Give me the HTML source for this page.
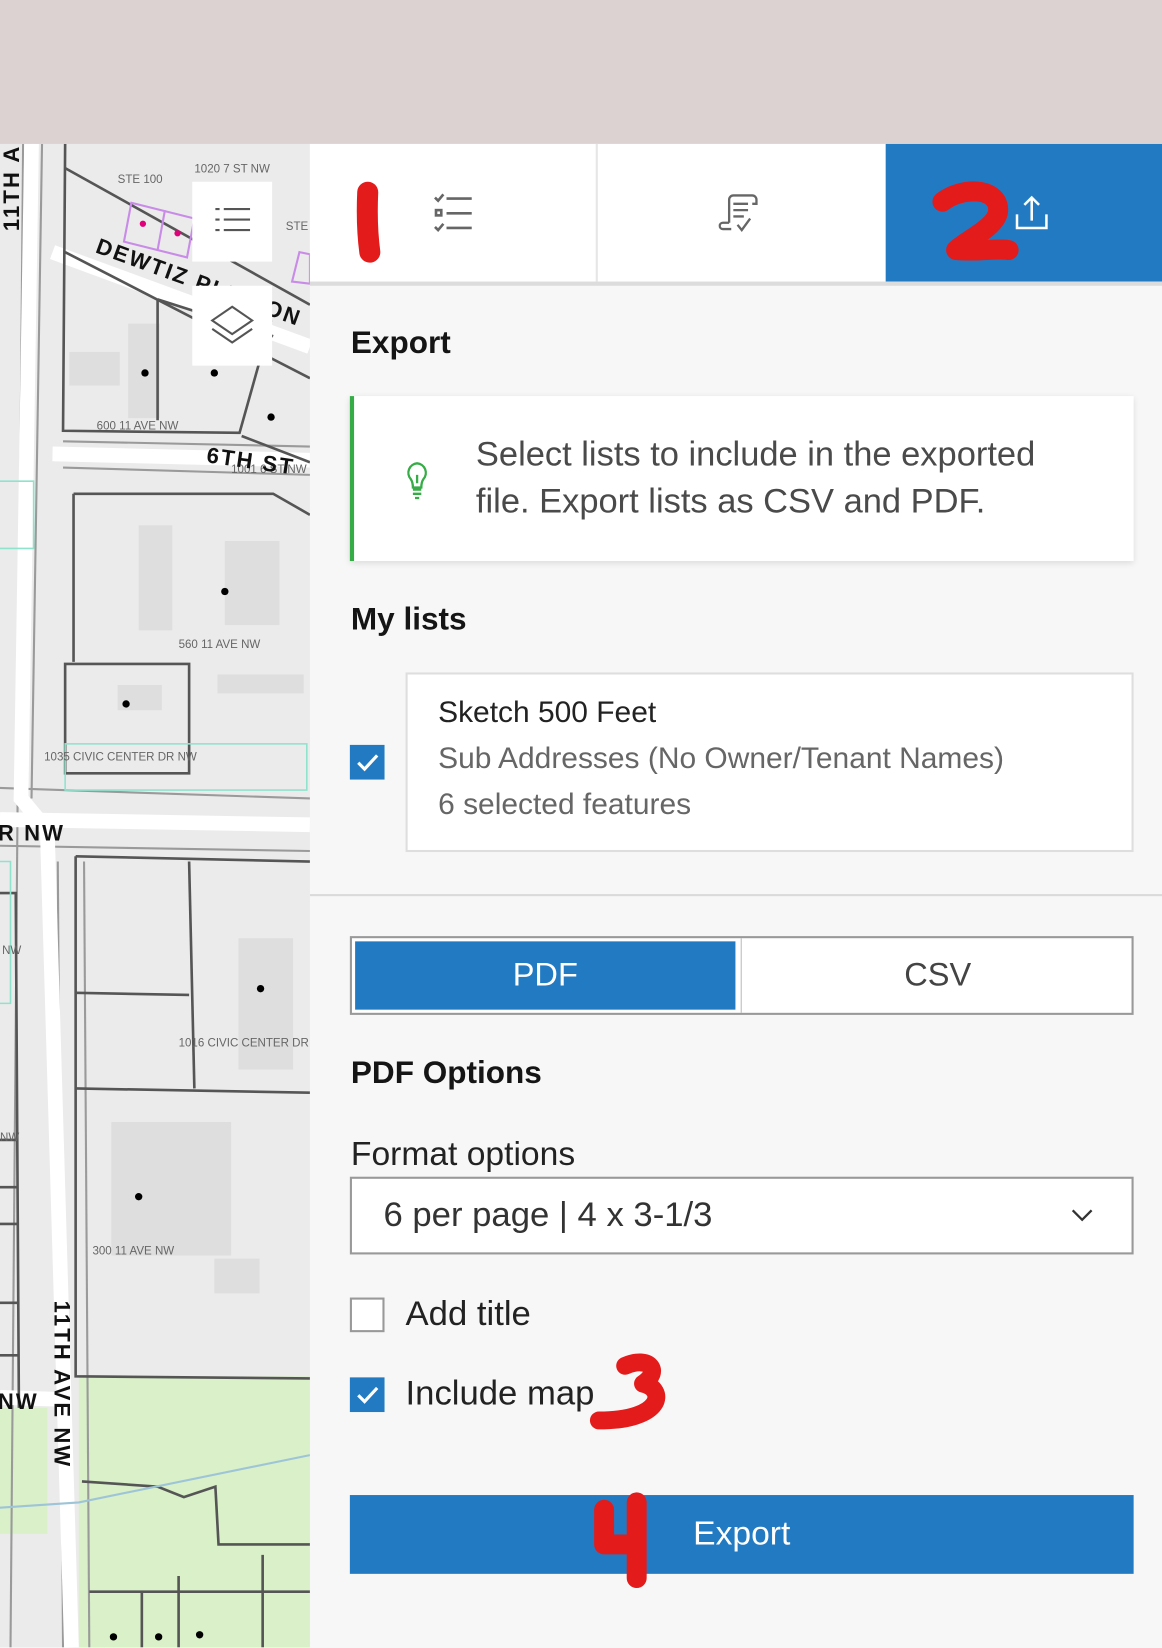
<!DOCTYPE html>
<html><head><meta charset="utf-8"><style>
html,body{margin:0;padding:0;width:1162px;height:1648px;overflow:hidden;background:#f7f7f7}
#w{position:absolute;left:0;top:0;width:1106px;height:1568px;transform:scale(1.05063);transform-origin:0 0;font-family:"Liberation Sans",sans-serif}
.a{position:absolute}
.t{position:absolute;white-space:nowrap;line-height:1}
.h{font-weight:bold;color:#151515}
</style></head><body><div id="w">
<div class="a" style="left:0;top:0;width:1106px;height:137px;background:#dcd2d1"></div>
<svg class="a" style="left:0;top:137px" width="295" height="1431" viewBox="0 137 295 1431">
<rect x="0" y="137" width="295" height="1431" fill="#ebebeb"/>
<polygon points="75,1310 295,1310 295,1568 75,1568" fill="#d9f0c8"/>
<polygon points="0,1340 45,1340 45,1460 0,1460" fill="#d9f0c8"/>
<g fill="#dedede"><rect x="132" y="500" width="32" height="100"/><rect x="214" y="515" width="52" height="80"/><rect x="66" y="335" width="48" height="32"/><rect x="122" y="308" width="30" height="90"/><rect x="227" y="893" width="52" height="125"/><rect x="106" y="1068" width="114" height="127"/><rect x="204" y="1198" width="43" height="33"/><rect x="207" y="642" width="82" height="18"/><rect x="112" y="652" width="42" height="24"/></g>
<g fill="none" stroke="#9a9a9a" stroke-width="2"><path d="M22,137 L10,1568"/><path d="M40,137 L30,760"/><path d="M55,820 L60,1568"/><path d="M80,820 L85,1568"/><path d="M0,750 L295,760"/><path d="M0,805 L295,810"/><path d="M60,420 L295,425"/><path d="M60,445 L295,452"/></g>
<g fill="none" stroke="#fff" stroke-width="14"><path d="M30,137 L20,760 L45,790 L68,1568"/><path d="M0,780 L295,785"/><path d="M50,432 L295,438"/><path d="M50,240 L295,330"/><path d="M0,1330 L60,1332"/></g>
<g fill="none" stroke="#555" stroke-width="2.5"><path d="M62,137 L60,410 L228,412 L258,305"/><path d="M62,240 L295,360"/><path d="M62,160 L295,290"/><path d="M150,285 L150,400"/><path d="M150,285 L260,320"/><path d="M230,415 L295,440"/><path d="M70,470 L260,470 L295,490"/><path d="M70,470 L70,630"/><path d="M62,632 L180,632 L180,736 L62,736 Z"/><path d="M72,815 L72,1310 L295,1312"/><path d="M72,815 L295,820"/><path d="M180,820 L185,1036"/><path d="M72,945 L180,947"/><path d="M72,1036 L295,1040"/><path d="M78,1410 L150,1415 L175,1425 L205,1415 L208,1470 L295,1470"/><path d="M85,1515 L295,1515"/><path d="M135,1515 L135,1568"/><path d="M170,1500 L170,1568"/><path d="M250,1480 L250,1568"/><path d="M0,850 L15,850 L18,1340"/><path d="M0,1165 L18,1165"/><path d="M0,1240 L18,1240"/><path d="M0,1290 L18,1290"/><path d="M0,1085 L16,1085"/><path d="M0,1130 L16,1130"/></g>
<g fill="none" stroke="#8fe3cc" stroke-width="1.5"><rect x="62" y="708" width="230" height="44"/><path d="M0,458 L32,458 L32,522 L0,522"/><path d="M0,820 L10,820 L10,955 L0,955"/></g>
<path d="M0,1435 L75,1430 L295,1385" stroke="#9ec4d8" stroke-width="2" fill="none"/>
<g fill="none" stroke="#c98be8" stroke-width="2"><path d="M125,193 L185,208 L178,245 L118,230 Z"/><path d="M157,200 L150,238"/><path d="M285,240 L295,242 L295,270 L278,268 Z"/></g>
<g fill="#e0007a"><circle cx="136" cy="213" r="3"/><circle cx="169" cy="222" r="3"/></g>
<g fill="#000"><circle cx="138" cy="355" r="3.5"/><circle cx="204" cy="355" r="3.5"/><circle cx="258" cy="397" r="3.5"/><circle cx="214" cy="563" r="3.5"/><circle cx="120" cy="670" r="3.5"/><circle cx="248" cy="941" r="3.5"/><circle cx="132" cy="1139" r="3.5"/><circle cx="108" cy="1558" r="3.5"/><circle cx="151" cy="1558" r="3.5"/><circle cx="190" cy="1556" r="3.5"/></g>
<g font-family="Liberation Sans,sans-serif" font-size="11" fill="#666"><text x="112" y="174">STE 100</text><text x="185" y="164">1020 7 ST NW</text><text x="272" y="219">STE</text><text x="92" y="409">600 11 AVE NW</text><text x="220" y="450">1001 6 ST NW</text><text x="170" y="617">560 11 AVE NW</text><text x="42" y="724">1035 CIVIC CENTER DR NW</text><text x="170" y="996">1016 CIVIC CENTER DR</text><text x="88" y="1194">300 11 AVE NW</text><text x="2" y="908">NW</text><text x="0" y="1086">NW</text></g>
<g font-family="Liberation Sans,sans-serif" font-size="21" font-weight="bold" fill="#111" letter-spacing="2"><text x="90" y="240" transform="rotate(20 90 240)">DEWTIZ PLZ CON</text><text x="196" y="440" transform="rotate(8 196 440)">6TH ST</text><text x="-2" y="800">R NW</text><text x="-2" y="1341">NW</text><text transform="translate(18,220) rotate(-90)">11TH A</text><text transform="translate(52,1238) rotate(90)">11TH AVE NW</text></g>
<rect x="183" y="173" width="76" height="76" fill="#fff"/>
<g stroke="#555" stroke-width="2"><path d="M205,199h4M213,199h25M205,209h4M213,209h25M205,219h4M213,219h25"/></g>
<rect x="183" y="272" width="76" height="76" fill="#fff"/>
<g fill="none" stroke="#555" stroke-width="2"><path d="M221,292 L240,305 L221,318 L202,305 Z"/><path d="M202,313 L221,326 L240,313"/></g>
</svg>
<div class="a" style="left:295px;top:137px;width:811px;height:131px;background:#fff"></div>
<div class="a" style="left:567px;top:137px;width:2px;height:131px;background:#e6e6e6"></div>
<div class="a" style="left:843px;top:137px;width:263px;height:131px;background:#227bc2"></div>
<div class="a" style="left:295px;top:268px;width:811px;height:4px;background:#dcdcdc"></div>
<svg class="a" style="left:410px;top:182px" width="44" height="44" viewBox="0 0 44 44"><g stroke="#666" stroke-width="2.5" fill="none"><path d="M4,6l3,3l5,-6M4,34l3,3l5,-6"/><rect x="5" y="18" width="5" height="5"/><path d="M15,7h24M15,21h24M15,35h24"/></g></svg>
<svg class="a" style="left:684px;top:182px" width="44" height="44" viewBox="0 0 44 44"><g stroke="#666" stroke-width="2.2" fill="none"><path d="M10,30V8a4,4 0 0 1 4,-4h18a4,4 0 0 1 4,4v4h-4"/><path d="M14,12h14M14,18h14M14,24h10"/><path d="M10,30h-6a3,3 0 0 0 0,6h8"/><path d="M18,32l4,5l8,-11"/></g></svg>
<svg class="a" style="left:962px;top:184px" width="40" height="40" viewBox="0 0 40 40"><g stroke="#fff" stroke-width="2.4" fill="none"><path d="M20,4v22M13,11l7,-7l7,7"/><path d="M6,20v13h28v-13"/></g></svg>
<div class="t h" style="left:334px;top:312px;font-size:30px">Export</div>
<div class="a" style="left:333px;top:377px;width:746px;height:157px;background:#fff;box-shadow:0 2px 6px rgba(0,0,0,.12);border-left:4px solid #35ac46;box-sizing:border-box"></div>
<svg class="a" style="left:385px;top:438px" width="24" height="40" viewBox="0 0 24 40"><g stroke="#35ac46" stroke-width="2.2" fill="none"><path d="M12,3a9,9 0 0 0 -6,15c2,3 2,6 2,8h8c0,-2 0,-5 2,-8a9,9 0 0 0 -6,-15z"/><path d="M8,28h8M8,32h8M10,36h4M12,14v8"/></g></svg>
<div class="t" style="left:453px;top:409px;font-size:32.8px;color:#4a4a4a;line-height:45px">Select lists to include in the exported<br>file. Export lists as CSV and PDF.</div>
<div class="t h" style="left:334px;top:575px;font-size:30px">My lists</div>
<div class="a" style="left:333px;top:709px;width:33px;height:33px;background:#227bc2"></div>
<svg class="a" style="left:333px;top:709px" width="33" height="33"><path d="M8,17l6,6l12,-13" stroke="#fff" stroke-width="3" fill="none"/></svg>
<div class="a" style="left:386px;top:640px;width:693px;height:171px;background:#fff;border:2px solid #dedede;box-sizing:border-box"></div>
<div class="t" style="left:417px;top:664px;font-size:28.5px;color:#222">Sketch 500 Feet</div>
<div class="t" style="left:417px;top:708px;font-size:28.5px;color:#666">Sub Addresses (No Owner/Tenant Names)</div>
<div class="t" style="left:417px;top:752px;font-size:28.5px;color:#666">6 selected features</div>
<div class="a" style="left:295px;top:851px;width:811px;height:2px;background:#dadada"></div>
<div class="a" style="left:333px;top:891px;width:746px;height:75px;background:#fff;border:2px solid #999;box-sizing:border-box"></div>
<div class="a" style="left:338px;top:896px;width:362px;height:65px;background:#227bc2"></div>
<div class="a" style="left:705px;top:893px;width:1px;height:71px;background:#bbb"></div>
<div class="t" style="left:338px;top:912px;width:362px;text-align:center;font-size:31px;color:#fff">PDF</div>
<div class="t" style="left:706px;top:912px;width:373px;text-align:center;font-size:31px;color:#444">CSV</div>
<div class="t h" style="left:334px;top:1007px;font-size:30px">PDF Options</div>
<div class="t" style="left:334px;top:1082px;font-size:32px;color:#222">Format options</div>
<div class="a" style="left:333px;top:1120px;width:746px;height:74px;background:#fff;border:2px solid #999;box-sizing:border-box"></div>
<div class="t" style="left:365px;top:1139px;font-size:33px;color:#333">6 per page | 4 x 3-1/3</div>
<svg class="a" style="left:1018px;top:1148px" width="24" height="16"><path d="M3,4l9,9l9,-9" stroke="#333" stroke-width="2.2" fill="none"/></svg>
<div class="a" style="left:333px;top:1235px;width:33px;height:33px;background:#fff;border:2px solid #999;box-sizing:border-box"></div>
<div class="t" style="left:386px;top:1233px;font-size:33px;color:#222">Add title</div>
<div class="a" style="left:333px;top:1311px;width:33px;height:33px;background:#227bc2"></div>
<svg class="a" style="left:333px;top:1311px" width="33" height="33"><path d="M8,17l6,6l12,-13" stroke="#fff" stroke-width="3" fill="none"/></svg>
<div class="t" style="left:386px;top:1309px;font-size:33px;color:#222">Include map</div>
<div class="a" style="left:333px;top:1423px;width:746px;height:75px;background:#227bc2"></div>
<div class="t" style="left:333px;top:1443px;width:746px;text-align:center;font-size:32px;color:#fff">Export</div>
<svg class="a" style="left:0;top:0" width="1106" height="1568" viewBox="0 0 1106 1568" fill="none" stroke="#e31b1b" stroke-linecap="round" stroke-linejoin="round">
<path d="M350,183 C349,205 350,225 352,240" stroke-width="20"/>
<path d="M897,192 C915,178 948,178 950,198 C952,215 920,228 910,238 C930,240 948,236 960,238" stroke-width="19"/>
<path d="M595,1300 C618,1290 630,1305 612,1317 C634,1322 632,1352 570,1352" stroke-width="17"/>
<path d="M575,1437 L575,1470 L606,1470 M606,1430 L606,1502" stroke-width="19"/>
</svg>
</div></body></html>
